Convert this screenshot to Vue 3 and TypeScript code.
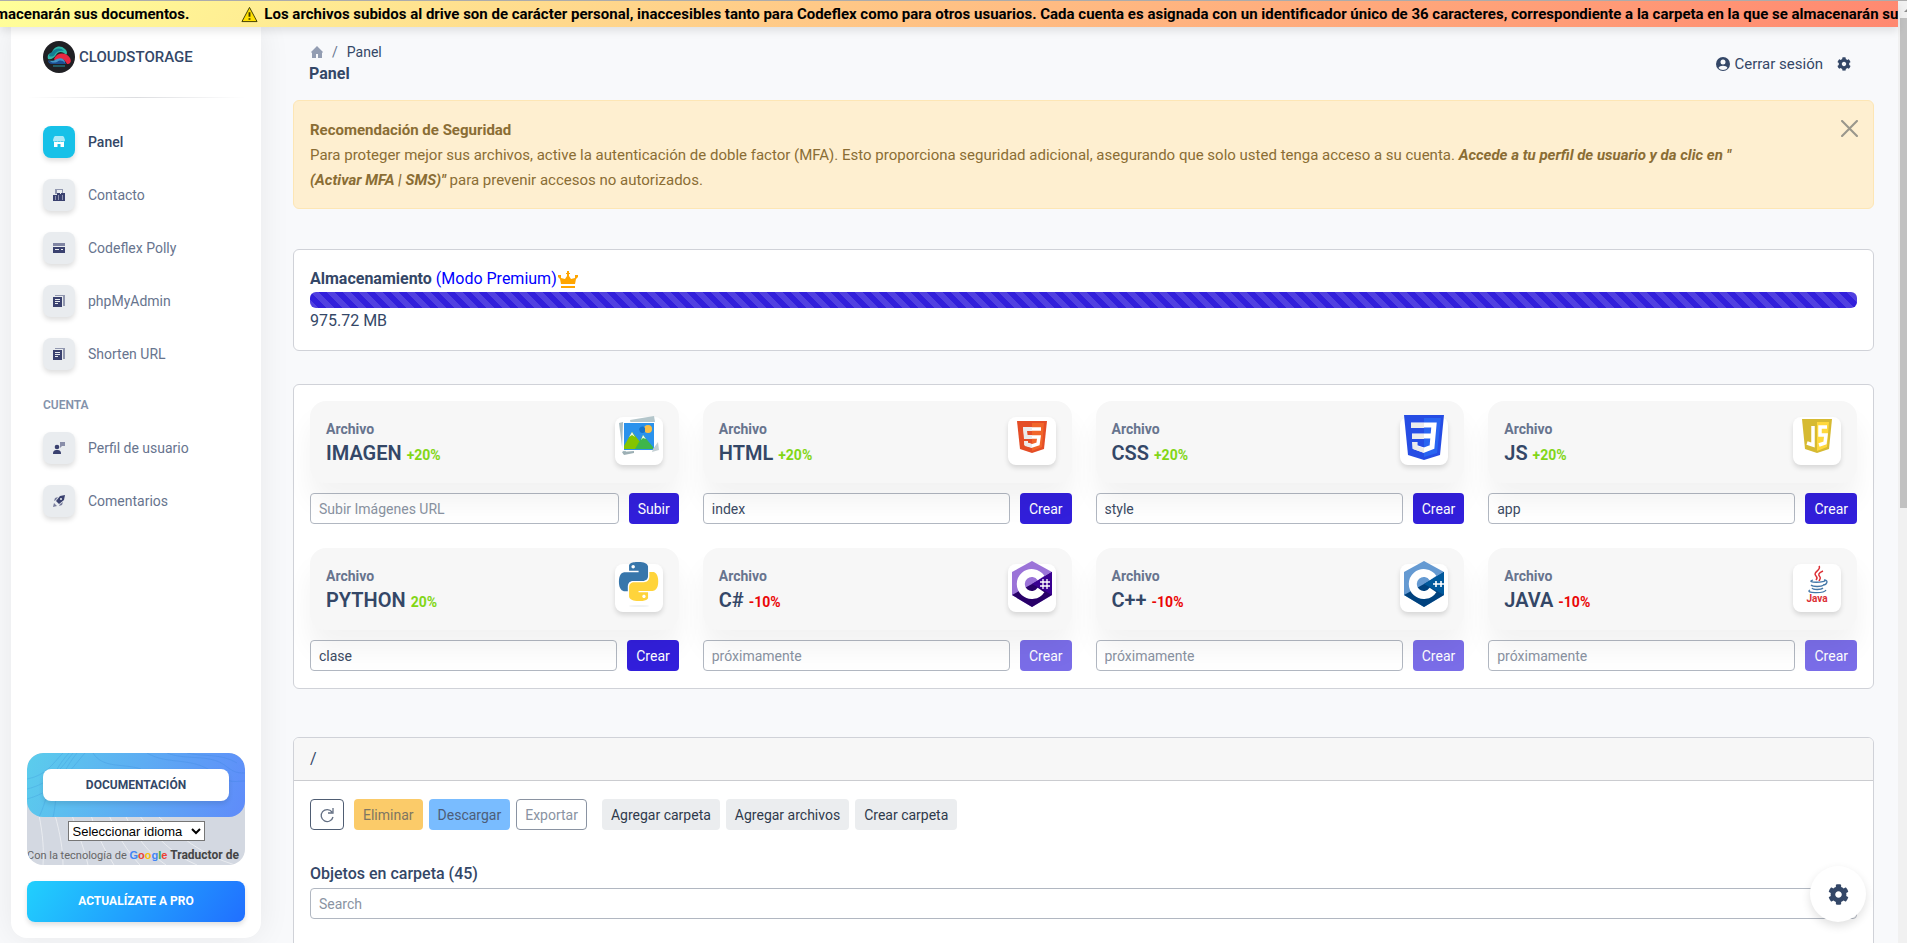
<script setup lang="ts">
import { ref } from 'vue'

interface NavItem {
  label: string
  icon: string
  active?: boolean
}

interface Tile {
  id: string
  name: string
  change: string
  up: boolean
  value: string
  placeholder: string
  action: string
  disabled?: boolean
}

const mainNav: NavItem[] = [
  { label: 'Panel', icon: 'shop', active: true },
  { label: 'Contacto', icon: 'office' },
  { label: 'Codeflex Polly', icon: 'card' },
  { label: 'phpMyAdmin', icon: 'doc' },
  { label: 'Shorten URL', icon: 'doc' },
]

const accountNav: NavItem[] = [
  { label: 'Perfil de usuario', icon: 'user' },
  { label: 'Comentarios', icon: 'rocket' },
]

const tiles = ref<Tile[]>([
  { id: 'image', name: 'IMAGEN', change: '+20%', up: true, value: '', placeholder: 'Subir Imágenes URL', action: 'Subir' },
  { id: 'html', name: 'HTML', change: '+20%', up: true, value: 'index', placeholder: '', action: 'Crear' },
  { id: 'css', name: 'CSS', change: '+20%', up: true, value: 'style', placeholder: '', action: 'Crear' },
  { id: 'js', name: 'JS', change: '+20%', up: true, value: 'app', placeholder: '', action: 'Crear' },
  { id: 'python', name: 'PYTHON', change: '20%', up: true, value: 'clase', placeholder: '', action: 'Crear' },
  { id: 'csharp', name: 'C#', change: '-10%', up: false, value: '', placeholder: 'próximamente', action: 'Crear', disabled: true },
  { id: 'cpp', name: 'C++', change: '-10%', up: false, value: '', placeholder: 'próximamente', action: 'Crear', disabled: true },
  { id: 'java', name: 'JAVA', change: '-10%', up: false, value: '', placeholder: 'próximamente', action: 'Crear', disabled: true },
])

const search = ref('')
const language = ref('')
const alertOpen = ref(true)

const cog =
  'M487.4 315.7l-42.6-24.6c4.3-23.2 4.3-47 0-70.2l42.6-24.6c4.9-2.8 7.1-8.6 5.5-14-11.1-35.6-30-67.8-54.7-94.6-3.8-4.1-10-5.1-14.8-2.3L380.8 110c-17.9-15.4-38.5-27.3-60.8-35.1V25.8c0-5.6-3.9-10.5-9.4-11.7-36.7-8.2-74.3-7.8-109.2 0-5.5 1.2-9.4 6.1-9.4 11.7V75c-22.2 7.9-42.8 19.8-60.8 35.1L88.7 85.5c-4.9-2.8-11-1.9-14.8 2.3-24.7 26.7-43.6 58.9-54.7 94.6-1.7 5.4.6 11.2 5.5 14L67.3 221c-4.3 23.2-4.3 47 0 70.2l-42.6 24.6c-4.9 2.8-7.1 8.6-5.5 14 11.1 35.6 30 67.8 54.7 94.6 3.8 4.1 10 5.1 14.8 2.3l42.6-24.6c17.9 15.4 38.5 27.3 60.8 35.1v49.2c0 5.6 3.9 10.5 9.4 11.7 36.7 8.2 74.3 7.8 109.2 0 5.5-1.2 9.4-6.1 9.4-11.7v-49.2c22.2-7.9 42.8-19.8 60.8-35.1l42.6 24.6c4.9 2.8 11 1.9 14.8-2.3 24.7-26.7 43.6-58.9 54.7-94.6 1.5-5.5-.7-11.3-5.6-14.1zM256 336c-44.1 0-80-35.9-80-80s35.9-80 80-80 80 35.9 80 80-35.9 80-80 80z'

const python =
  'M14.25.18l.9.2.73.26.59.3.45.32.34.34.25.34.16.33.1.3.04.26.02.2-.01.13V8.5l-.05.63-.13.55-.21.46-.26.38-.3.31-.33.25-.35.19-.35.14-.33.1-.3.07-.26.04-.21.02H8.77l-.69.05-.59.14-.5.22-.41.27-.33.32-.27.35-.2.36-.15.37-.1.35-.07.32-.04.27-.02.21v3.06H3.17l-.21-.03-.28-.07-.32-.12-.35-.18-.36-.26-.36-.36-.35-.46-.32-.59-.28-.73-.21-.88-.14-1.05-.05-1.23.06-1.22.16-1.04.24-.87.32-.71.36-.57.4-.44.42-.33.42-.24.4-.16.36-.1.32-.05.24-.01h.16l.06.01h8.16v-.83H6.18l-.01-2.75-.02-.37.05-.34.11-.31.17-.28.25-.26.31-.23.38-.2.44-.18.51-.15.58-.12.64-.1.71-.06.77-.04.84-.02 1.27.05zm-6.3 1.98l-.23.33-.08.41.08.41.23.34.33.22.41.09.41-.09.33-.22.23-.34.08-.41-.08-.41-.23-.33-.33-.22-.41-.09-.41.09z'
</script>

<template>
  <div class="shell">
    <div class="viewport">
      <div class="ticker" role="status">
        <div class="track">
          <span>almacenarán sus documentos.</span>
          <span class="message">
            <svg class="warn" viewBox="0 0 18 17" aria-hidden="true">
              <path d="M9 1 17 16H1z" fill="#ffe000" stroke="#3c3800" stroke-linejoin="round" />
              <path d="M9 6v5M9 12.500v1.500" stroke="#3c3800" stroke-width="2" />
            </svg>
            Los archivos subidos al drive son de carácter personal, inaccesibles tanto para Codeflex como para otros usuarios. Cada cuenta es asignada con un identificador único de 36 caracteres, correspondiente a la carpeta en la que se almacenarán sus documentos.
          </span>
        </div>
      </div>

      <div class="body">
        <aside class="sidebar">
          <a class="brand" href="#">
            <svg viewBox="0 0 32 32" aria-hidden="true">
              <circle cx="16" cy="16" r="16" fill="#202024" />
              <path d="M5 18c-1-4 1-6 4-6 1-6 8-9 13-4 3 3 2 5 1 6-3-4-8-4-10 0-2 3-5 5-8 4z" fill="#2fb7a8" />
              <path d="M9 11c3-4 9-5 12-1-4-1-7 0-9 3-1 3-4 3-6 2 0-2 1-3 3-4z" fill="#137d93" />
              <path d="M11 18c3-7 12-7 16-1 2 4 0 6-3 6-2-4-5-6-8-4-2 1-4 1-5-1z" fill="#e92742" />
              <path d="M5 19c2 3 6 2 9 0 4-3 8 0 9 4H9c-3 0-4-2-4-4z" fill="#1c4d91" />
              <path d="M6 19c3 2 6 0 8-1 5-2 8 1 8 4-3-3-5-3-8-1-3 1-6 1-8-2z" fill="#4396c8" />
              <path d="M10 25h12" stroke="#2596a5" />
            </svg>
            <span>CLOUDSTORAGE</span>
          </a>
          <hr class="rule" />
          <nav class="nav">
            <a v-for="item in mainNav" :key="item.label" href="#" :class="['nav-link', { active: item.active }]">
              <span class="nav-icon">
                <svg viewBox="0 0 12 12" aria-hidden="true">
                  <g v-if="item.icon === 'shop'" fill="#fff">
                    <path d="M2 0h8l1 1 1 3c0 2-2 2-3 1-1 1-2 1-3 0-1 1-2 1-3 0-1 1-3 1-3-1l1-3z" opacity=".65" />
                    <path d="M1 6h10v5H7.500V8h-3v3H1z" />
                  </g>
                  <g v-else-if="item.icon === 'office'" fill="#3a416f">
                    <path d="M2 0h8v4H9V1H4v4H2z" opacity=".5" />
                    <path d="M0 6h4V4h3v1h1V4h4v8H0z" />
                    <path d="M2 7h1v4H2zM5 6h1v5H5zM9 6h1v5H9z" fill="#8f93b0" />
                  </g>
                  <g v-else-if="item.icon === 'card'" fill="#3a416f">
                    <path d="M0 1h12v3H0z" opacity=".6" />
                    <path d="M0 5h12v6H0z" />
                    <path d="M2 7h4v1H2zM8 7h2v1H8z" fill="#e9ecef" />
                  </g>
                  <g v-else fill="#3a416f">
                    <path d="M2 0h10v11h-2V1H2z" opacity=".5" />
                    <path d="M0 2h9v10H0z" />
                    <path d="M2 4h5v1H2zM2 6h5v1H2zM2 8h3v1H2z" fill="#e9ecef" />
                  </g>
                </svg>
              </span>
              {{ item.label }}
            </a>
          </nav>
          <h6 class="nav-title">Cuenta</h6>
          <nav class="nav">
            <a v-for="item in accountNav" :key="item.label" href="#" class="nav-link">
              <span class="nav-icon">
                <svg viewBox="0 0 12 12" aria-hidden="true">
                  <g v-if="item.icon === 'user'" fill="#3a416f">
                    <path d="M7 0h5v4H9L7 6z" opacity=".55" />
                    <circle cx="4" cy="5" r="2.300" />
                    <path d="M0 12c0-3 1-4 4-4s4 1 4 4z" />
                  </g>
                  <g v-else fill="#3a416f">
                    <path d="M12 0 11 5 6 9 3 6 7 1z" />
                    <path d="M5 2 2 3 1 6l2-1zM10 7 9 10 6 11l1-2zM0 12l1-4 3 3z" opacity=".65" />
                    <circle cx="8" cy="4" r="1" fill="#e9ecef" />
                  </g>
                </svg>
              </span>
              {{ item.label }}
            </a>
          </nav>

          <div class="sidebar-foot">
            <div class="help">
              <svg class="waves" viewBox="0 0 218 112" preserveAspectRatio="none" aria-hidden="true">
                <g fill="none" stroke="#fff" stroke-opacity=".5">
                  <path d="M12 62c4 20 5 35 4 50M28 62c5 18 8 35 8 50M45 62c4 14 12 32 16 50M64 62c5 18 13 34 23 50M82 62c8 20 18 36 31 50M98 62c10 20 23 38 41 50M112 62c17 22 34 40 58 50M130 62c20 20 45 40 78 50" />
                </g>
              </svg>
              <div class="help-card">
                <svg class="waves" viewBox="0 0 218 64" preserveAspectRatio="none" aria-hidden="true">
                  <g fill="none" stroke="#2b7fd0" stroke-opacity=".2">
                    <path d="M0 26C20 22 26 10 36 0M0 36C26 30 36 12 46 0M0 46C30 38 44 16 58 0M66 0c10 16 30 10 48 16M120 0c20 12 44 4 64 18s24 10 34 10M140 0c20 8 44 0 60 14 8 6 12 6 18 6M160 0c16 4 34 0 50 10M12 64c10-20 8-40 30-64M26 64c4-14 0-34 24-64" />
                  </g>
                </svg>
                <a class="doc-btn" href="#">Documentación</a>
              </div>
              <div class="translate">
                <select v-model="language" aria-label="Seleccionar idioma">
                  <option value="">Seleccionar idioma</option>
                  <option value="en">Inglés</option>
                </select>
                <p>
                  Con la tecnología de
                  <b class="google"><i class="b">G</i><i class="r">o</i><i class="y">o</i><i class="b">g</i><i class="g">l</i><i class="r">e</i></b>&nbsp;<strong>Traductor de</strong>
                </p>
              </div>
            </div>
            <a class="upgrade" href="#">Actualízate a Pro</a>
          </div>
        </aside>

        <main class="main">
          <header class="topbar">
            <div>
              <nav class="crumbs" aria-label="Ruta">
                <a href="#" aria-label="Inicio">
                  <svg viewBox="0 0 12 12" aria-hidden="true">
                    <path d="M6 0 12 6l-1 1v5H7V8H5v4H1V7L0 6z" fill="#939db2" />
                  </svg>
                </a>
                <span class="sep">/</span>
                <span>Panel</span>
              </nav>
              <h6 class="page-title">Panel</h6>
            </div>
            <div class="actions">
              <a href="#">
                <svg viewBox="0 0 14 14" aria-hidden="true">
                  <circle cx="7" cy="7" r="7" fill="#344767" />
                  <circle cx="7" cy="5" r="2.500" fill="#f8f9fb" />
                  <path d="M2.500 11c1-3 8-3 9 0-2 2.600-7 2.600-9 0z" fill="#f8f9fb" />
                </svg>
                Cerrar sesión
              </a>
              <button class="plain" type="button" aria-label="Ajustes">
                <svg viewBox="0 0 512 512" aria-hidden="true"><path :d="cog" fill="#344767" /></svg>
              </button>
            </div>
          </header>

          <section v-if="alertOpen" class="alert" role="alert">
            <strong>Recomendación de Seguridad</strong>
            <p>
              Para proteger mejor sus archivos, active la autenticación de doble factor (MFA). Esto proporciona seguridad adicional, asegurando que solo usted tenga acceso a su cuenta. <b>Accede a tu perfil de usuario y da clic en " (Activar MFA | SMS)"</b> para prevenir accesos no autorizados.
            </p>
            <button class="close" type="button" aria-label="Cerrar" @click="alertOpen = false">
              <svg viewBox="0 0 16 16" aria-hidden="true">
                <path d="M1 1 15 15M15 1 1 15" stroke="#9a978c" stroke-width="2" stroke-linecap="round" />
              </svg>
            </button>
          </section>

          <section class="card storage">
            <p class="storage-title">
              <b>Almacenamiento</b>&nbsp;<span>(Modo Premium)</span>
              <svg viewBox="0 0 20 17" aria-hidden="true">
                <g fill="#ffa500">
                  <path d="M3 13 2 8 0 6V4h3v3l4 1 2-3V3H8V2h1V0h2v2h1v1h-1v2l2 3 4-1V4h3v2l-2 2-1 5z" />
                  <path d="M3 15h14v2H3z" />
                </g>
              </svg>
            </p>
            <div class="progress" role="progressbar" aria-label="Almacenamiento" aria-valuenow="100"></div>
            <p class="amount">975.72 MB</p>
          </section>

          <section class="card files">
            <article v-for="tile in tiles" :key="tile.id">
              <div class="tile">
                <div>
                  <p class="kind">Archivo</p>
                  <h5>
                    {{ tile.name }} <span :class="tile.up ? 'up' : 'down'">{{ tile.change }}</span>
                  </h5>
                </div>
                <div class="logo">
                  <svg viewBox="0 0 48 64" aria-hidden="true">
                    <g v-if="tile.id === 'image'">
                      <path d="M15 15 39 11l1 6-24 3z" fill="#b4c6cb" />
                      <path d="m4 18 4-1 3 31-3 1z" fill="#a8bcc2" />
                      <path d="m7 47 12-1v2l-10 2z" fill="#9db0b5" />
                      <path d="M8 17h32v20l4 7-7 1-30 1z" fill="#fff" />
                      <path d="M9 18h30v27H9z" fill="#2a92ec" />
                      <circle cx="33" cy="24" r="4" fill="#f8be45" />
                      <path d="M24 24c2-4 7-3 6 1 1 3-3 4-5 2z" fill="#1573c9" />
                      <path d="m9 41 8-14 14 17H9z" fill="#83c500" />
                      <path d="m20 44 8-14 10 12v2z" fill="#3eb64b" />
                      <path d="m17 27 3 5-3-2-3 2zM28 30l3 4-3-1-2 2z" fill="#e8f3ee" />
                      <path d="m38 44 5-7 1 8-7 2z" fill="#c3cfd3" />
                    </g>
                    <g v-else-if="tile.id === 'html'">
                      <path d="M9 16h30l-3 28-12 4-12-4z" fill="#e44d26" />
                      <path d="M24 18h12l-2 24-10 4z" fill="#f16529" />
                      <path d="M33 24H17l1 8h13l-1 7-6 2-6-2v-3" fill="none" stroke="#fff" stroke-width="3.500" />
                      <path d="M24 22v4h-5v4h5v4h-8l-1-12zM16 36h4v2l4 1v4l-7-2z" fill="#ebebeb" />
                    </g>
                    <g v-else-if="tile.id === 'css'">
                      <path d="M4 10h40l-4 40-16 5-16-5z" fill="#264de4" />
                      <path d="M24 13h17l-4 35-13 4z" fill="#2965f1" />
                      <path d="M11 20h23l-2 22-8 3-9-3v-5" fill="none" stroke="#fff" stroke-width="5" />
                      <path d="M12 31h20" stroke="#fff" stroke-width="5" />
                      <path d="M11 18h13v5H11zM12 29h12v5H12zM12 37h5v4l7 2v5l-11-4z" fill="#ebebeb" />
                    </g>
                    <g v-else-if="tile.id === 'js'">
                      <path d="M9 14h30l-3 30-12 4-12-4z" fill="#d6ba32" />
                      <path d="M24 17h12l-2 25-10 4z" fill="#ffd83b" />
                      <path d="M20 21v19l-6-2M34 22h-7v8h6l-1 8-6 2" fill="none" stroke="#fff" stroke-width="3.500" />
                    </g>
                    <g v-else-if="tile.id === 'python'">
                      <ellipse cx="24" cy="54" rx="10" ry="1" fill="#f0f2f3" />
                      <g transform="translate(4 10) scale(1.630)">
                        <path :d="python" fill="#3776ab" />
                        <path :d="python" fill="#ffd43b" transform="rotate(180 12 12)" />
                      </g>
                    </g>
                    <g v-else-if="tile.id === 'csharp'">
                      <path d="m24 9 20 11v23L24 55 4 43V20z" fill="#9b73d8" />
                      <path d="m44 20v23L24 55 4 43 24 32z" fill="#280068" />
                      <path d="m44 20v23L24 32z" fill="#390091" />
                      <path d="M33 26a11 11 0 1 0 0 12" fill="none" stroke="#fff" stroke-width="8" />
                      <path d="M35 27v10M39 27v10M32 30h10M32 34h10" stroke="#fff" stroke-width="1.300" />
                    </g>
                    <g v-else-if="tile.id === 'cpp'">
                      <path d="m24 9 20 11v23L24 55 4 43V20z" fill="#659ad2" />
                      <path d="m44 20v23L24 55 4 43 24 32z" fill="#00427e" />
                      <path d="m44 20v23L24 32z" fill="#00599c" />
                      <path d="M33 26a11 11 0 1 0 0 12" fill="none" stroke="#fff" stroke-width="8" />
                      <path d="M36 29v6M33 32h6M41 29v6M38 32h6" stroke="#fff" stroke-width="1.600" />
                    </g>
                    <g v-else>
                      <g fill="none" stroke="#dc2f35" stroke-width="1.500">
                        <path d="M26 14c3 4-7 6-3 10 2 2 1 3 0 4M30 19c-5 2-5 4-3 6 1 1 0 2-1 4" />
                      </g>
                      <g fill="none" stroke="#4578a8" stroke-width="1.300">
                        <path d="M20 28c-9 3 14 3 12 0M18 33c2 2 10 2 13 0M19 36c1 2 9 2 11 0M17 38c-6 3 14 4 16 0M31 28c5 0 3 5-1 5" />
                      </g>
                      <text x="24" y="50" text-anchor="middle" class="java">Java</text>
                    </g>
                  </svg>
                </div>
              </div>
              <form class="create" @submit.prevent>
                <input v-model="tile.value" type="text" :placeholder="tile.placeholder" :aria-label="`Archivo ${tile.name}`" :disabled="tile.disabled" />
                <button class="btn primary" type="submit" :disabled="tile.disabled">{{ tile.action }}</button>
              </form>
            </article>
          </section>

          <section class="card browser">
            <header>/</header>
            <div class="browser-body">
              <div class="toolbar">
                <button class="btn reload" type="button" aria-label="Recargar">
                  <svg viewBox="0 0 16 16" aria-hidden="true">
                    <path d="M14 1v5H9M13 5A6 6 0 1 0 14 10" fill="none" stroke="#636f83" stroke-width="1.300" />
                  </svg>
                </button>
                <button class="btn warning" type="button" disabled>Eliminar</button>
                <button class="btn info" type="button" disabled>Descargar</button>
                <button class="btn outline" type="button" disabled>Exportar</button>
                <button class="btn light first" type="button">Agregar carpeta</button>
                <button class="btn light" type="button">Agregar archivos</button>
                <button class="btn light" type="button">Crear carpeta</button>
              </div>
              <label for="search">Objetos en carpeta (45)</label>
              <input id="search" v-model="search" type="text" placeholder="Search" />
            </div>
          </section>
        </main>
      </div>

      <button class="fab" type="button" aria-label="Configuración">
        <svg viewBox="0 0 512 512" aria-hidden="true"><path :d="cog" fill="#344767" /></svg>
      </button>
    </div>
    <div class="scrollbar" aria-hidden="true">
      <svg viewBox="0 0 9 17"><path d="M4 11 9 6v5z" fill="#8b8b8b" /></svg>
      <div class="thumb"></div>
    </div>
  </div>
</template>

<style>
body {
  margin: 0;
  background: #f8f9fb;
}
</style>

<style scoped>
.shell {
  display: flex;
  height: 100vh;
  box-sizing: border-box;
  overflow: hidden;
  border-top: 1px solid #acacac;
  background: #f8f9fb;
  color: #344767;
  font-family: Roboto, "Liberation Sans", sans-serif;
  font-size: 16px;
  line-height: 24px;
}
.shell * {
  box-sizing: border-box;
}
p,
h5,
h6 {
  margin: 0;
}
a {
  color: inherit;
  text-decoration: none;
}
svg {
  display: block;
  flex: none;
}
button,
input {
  font-family: inherit;
}
.viewport {
  position: relative;
  display: flex;
  flex-direction: column;
  flex: 1;
  min-width: 0;
}
.scrollbar {
  flex: none;
  width: 9px;
  padding-left: 2px;
  background: #f1f1f1;
}
.scrollbar svg {
  width: 9px;
  height: 17px;
}
.thumb {
  height: 52%;
  background: #c1c1c1;
}
.ticker {
  position: relative;
  z-index: 5;
  flex: none;
  height: 26px;
  overflow: hidden;
  background: linear-gradient(135deg, #ffff99 0%, #ffcc88 40%, #ff8870 100%);
  box-shadow: 0 4px 8px rgba(0, 0, 0, 0.1);
  color: #000;
  font-size: 15px;
  font-weight: 700;
  line-height: 26px;
  white-space: nowrap;
}
.track {
  display: flex;
  gap: 52px;
  margin-left: -17px;
}
.message {
  display: flex;
  align-items: center;
  gap: 6px;
}
.warn {
  width: 17px;
  height: 17px;
}
.body {
  display: flex;
  flex: 1;
  min-height: 0;
}
.sidebar {
  display: flex;
  flex-direction: column;
  flex: none;
  width: 250px;
  margin: 0 32px 5px 11px;
  padding: 14px 16px 16px;
  border-radius: 0 0 16px 16px;
  background: #fff;
  box-shadow: 0 0 32px rgba(0, 0, 0, 0.07);
}
.brand {
  display: flex;
  align-items: center;
  gap: 4px;
  padding-left: 16px;
  font-size: 15px;
  font-weight: 500;
}
.brand svg {
  width: 32px;
  height: 32px;
}
.rule {
  width: 100%;
  height: 1px;
  margin: 24px 0 17px;
  border: 0;
  background: linear-gradient(90deg, transparent, #dcdde0, transparent);
}
.nav-link {
  display: flex;
  align-items: center;
  gap: 13px;
  height: 53px;
  padding-left: 16px;
  color: #67748e;
  font-size: 14px;
}
.nav-link.active {
  color: #344767;
  font-weight: 500;
}
.nav-icon {
  display: grid;
  place-items: center;
  width: 32px;
  height: 32px;
  border-radius: 8px;
  background: #e9ecef;
  box-shadow: 0 3px 5px rgba(0, 0, 0, 0.13);
}
.active .nav-icon {
  background: #17c1e8;
}
.nav-icon svg {
  width: 12px;
  height: 12px;
}
.nav-title {
  padding: 13px 0 4px 16px;
  color: #8392ab;
  font-size: 12px;
  font-weight: 600;
  text-transform: uppercase;
}
.sidebar-foot {
  display: flex;
  flex-direction: column;
  gap: 16px;
  margin-top: auto;
}
.help {
  position: relative;
  height: 112px;
  overflow: hidden;
  border-radius: 16px;
  background: #d3d8e1;
}
.waves {
  position: absolute;
  inset: 0;
  width: 100%;
  height: 100%;
}
.help-card {
  position: relative;
  overflow: hidden;
  padding: 16px;
  border-radius: 16px;
  background: linear-gradient(110deg, #5bcdec, #5f8bfa);
}
.doc-btn {
  position: relative;
  display: block;
  border-radius: 8px;
  background: #fff;
  box-shadow: 0 3px 5px rgba(0, 0, 0, 0.1);
  font-size: 12px;
  font-weight: 700;
  line-height: 32px;
  text-align: center;
  text-transform: uppercase;
}
.translate {
  position: relative;
  padding-top: 4px;
  color: #666;
  font-size: 11px;
  text-align: center;
  white-space: nowrap;
}
.translate select {
  display: block;
  width: 137px;
  height: 20px;
  margin: 0 auto 2px;
  padding: 0;
  border: 1px solid #767676;
  background: #fff;
  color: #000;
  font-family: "Liberation Sans", sans-serif;
  font-size: 13px;
}
.translate p {
  text-align: left;
}
.translate strong {
  color: #444;
  font-size: 12px;
}
.google {
  font-family: "Liberation Sans", sans-serif;
  font-size: 11px;
}
.google i {
  font-style: normal;
}
.google .b {
  color: #4285f4;
}
.google .r {
  color: #ea4335;
}
.google .y {
  color: #fbbc05;
}
.google .g {
  color: #34a853;
}
.upgrade {
  display: block;
  border-radius: 8px;
  background: linear-gradient(125deg, #21d0fd, #216fff);
  box-shadow: 0 3px 5px rgba(0, 0, 0, 0.12);
  color: #fff;
  font-size: 12px;
  font-weight: 700;
  line-height: 41px;
  text-align: center;
  text-transform: uppercase;
}
.main {
  flex: 1;
  min-width: 0;
  margin-right: 24px;
}
.topbar {
  display: flex;
  align-items: center;
  justify-content: space-between;
  height: 73px;
  padding: 0 23px 0 16px;
}
.crumbs {
  display: flex;
  align-items: center;
  gap: 9px;
  padding-left: 2px;
  font-size: 14px;
}
.crumbs svg {
  width: 12px;
  height: 12px;
}
.sep {
  color: #67748e;
}
.page-title {
  padding-bottom: 3px;
  font-size: 16px;
  font-weight: 700;
  line-height: 20px;
}
.actions,
.actions a {
  display: flex;
  align-items: center;
  gap: 5px;
  font-size: 15px;
}
.actions {
  gap: 14px;
}
.actions svg {
  width: 14px;
  height: 14px;
}
.plain {
  padding: 0;
  border: 0;
  background: none;
}
.alert {
  position: relative;
  padding: 17px 96px 15px 16px;
  border: 1px solid #fde6b5;
  border-radius: 6px;
  background: #feefd0;
  color: #8a6d34;
  font-size: 15px;
  line-height: 25px;
}
.alert strong {
  display: block;
  font-weight: 700;
}
.alert b {
  font-style: italic;
  font-weight: 700;
}
.close {
  position: absolute;
  top: 19px;
  right: 15px;
  padding: 0;
  border: 0;
  background: none;
}
.close svg {
  width: 17px;
  height: 17px;
}
.card {
  border: 1px solid #d0d2d8;
  border-radius: 6px;
  background: #fff;
}
.storage {
  margin-top: 40px;
  padding: 16px 16px 17px;
}
.storage-title {
  display: flex;
  align-items: center;
  height: 26px;
}
.storage-title b {
  font-weight: 700;
}
.storage-title span {
  color: #0000ff;
}
.storage-title svg {
  width: 20px;
  height: 17px;
  margin-left: 1px;
}
.amount {
  padding-top: 1px;
}
.progress {
  height: 16px;
  border-radius: 6px;
  background: linear-gradient(
      45deg,
      rgba(255, 255, 255, 0.15) 25%,
      transparent 25%,
      transparent 50%,
      rgba(255, 255, 255, 0.15) 50%,
      rgba(255, 255, 255, 0.15) 75%,
      transparent 75%
    )
    0 0 / 16px 16px #321fdb;
}
.files {
  display: grid;
  grid-template-columns: repeat(4, minmax(0, 1fr));
  gap: 24px;
  margin-top: 33px;
  padding: 16px 16px 17px;
}
.tile {
  position: relative;
  z-index: 1;
  display: flex;
  align-items: flex-start;
  justify-content: space-between;
  height: 82px;
  padding: 16px;
  border-radius: 16px;
  background: #f7f7f7;
  box-shadow: 0 20px 27px rgba(0, 0, 0, 0.05);
}
.kind {
  color: #67748e;
  font-size: 14px;
  font-weight: 700;
}
h5 {
  font-size: 20px;
  font-weight: 600;
}
h5 span {
  font-size: 14px;
  font-weight: 700;
}
.up {
  color: #82d616;
}
.down {
  color: #ea0606;
}
.logo {
  width: 48px;
  height: 48px;
  border-radius: 8px;
  background: #fff;
  box-shadow: 0 3px 5px rgba(0, 0, 0, 0.13);
}
.logo svg {
  width: 48px;
  height: 64px;
  margin-top: -12px;
}
.java {
  fill: #dc2f35;
  font-size: 10px;
  font-weight: 700;
}
.create {
  display: flex;
  gap: 10px;
  margin-top: 10px;
}
input {
  width: 100%;
  min-width: 0;
  height: 31px;
  padding: 0 8px;
  border: 1px solid #b1b7c1;
  border-radius: 4px;
  background: #fff;
  color: #3c4b64;
  font-size: 14px;
}
input::placeholder {
  color: #8a93a2;
  opacity: 1;
}
.btn {
  flex: none;
  height: 31px;
  padding: 0 8px;
  border: 1px solid transparent;
  border-radius: 4px;
  font-size: 14px;
}
.primary {
  background: #321fdb;
  color: #fff;
}
.primary:disabled {
  background: #7a6de8;
}
.browser {
  height: 500px;
  margin-top: 48px;
  overflow: hidden;
}
.browser header {
  height: 43px;
  padding: 9px 16px;
  border-bottom: 1px solid #cbccd0;
  background: #f7f7f7;
}
.browser-body {
  padding: 18px 16px;
}
.toolbar {
  display: flex;
  gap: 6px;
  margin-bottom: 32px;
}
.reload {
  margin-right: 4px;
  border-color: #4f5d73;
  background: #fff;
}
.reload svg {
  width: 16px;
  height: 16px;
}
.warning {
  background: #fbcb69;
  color: #7e7662;
}
.info {
  background: #79bcff;
  color: #4d5d78;
}
.outline {
  border-color: #8a93a2;
  background: #fff;
  color: #8a93a2;
}
.light {
  background: #ebedef;
  color: #2f3a4c;
}
.first {
  margin-left: 9px;
}
label {
  display: block;
  margin-bottom: 2px;
  font-weight: 500;
}
.fab {
  position: absolute;
  right: 32px;
  bottom: 21px;
  z-index: 6;
  display: grid;
  place-items: center;
  width: 56px;
  height: 56px;
  border: 0;
  border-radius: 50%;
  background: #fff;
  box-shadow: 0 4px 10px rgba(0, 0, 0, 0.12);
}
.fab svg {
  width: 21px;
  height: 21px;
}
</style>
